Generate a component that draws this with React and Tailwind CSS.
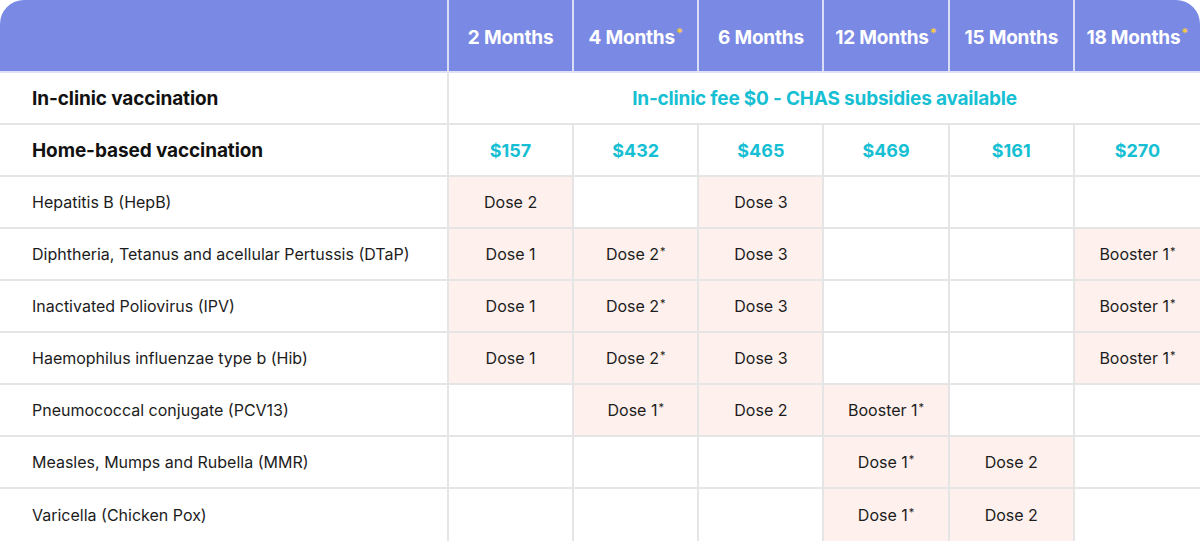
import React from "react";

const months = [
  { label: "2 Months", star: false },
  { label: "4 Months", star: true },
  { label: "6 Months", star: false },
  { label: "12 Months", star: true },
  { label: "15 Months", star: false },
  { label: "18 Months", star: true },
];

const prices = ["$157", "$432", "$465", "$469", "$161", "$270"];

const rows = [
  { name: "Hepatitis B (HepB)", cells: ["Dose 2", "", "Dose 3", "", "", ""] },
  { name: "Diphtheria, Tetanus and acellular Pertussis (DTaP)", cells: ["Dose 1", "Dose 2*", "Dose 3", "", "", "Booster 1*"] },
  { name: "Inactivated Poliovirus (IPV)", cells: ["Dose 1", "Dose 2*", "Dose 3", "", "", "Booster 1*"] },
  { name: "Haemophilus influenzae type b (Hib)", cells: ["Dose 1", "Dose 2*", "Dose 3", "", "", "Booster 1*"] },
  { name: "Pneumococcal conjugate (PCV13)", cells: ["", "Dose 1*", "Dose 2", "Booster 1*", "", ""] },
  { name: "Measles, Mumps and Rubella (MMR)", cells: ["", "", "", "Dose 1*", "Dose 2", ""] },
  { name: "Varicella (Chicken Pox)", cells: ["", "", "", "Dose 1*", "Dose 2", ""] },
];

function CellText({ text }) {
  if (!text) return null;
  const star = text.endsWith("*");
  const base = star ? text.slice(0, -1) : text;
  return (
    <span>
      {base}
      {star && <span className="relative -top-[5px] text-[11px] ml-[1px]">*</span>}
    </span>
  );
}

export default function App() {
  const font = { fontFamily: "Inter, 'Noto Sans', sans-serif" };
  return (
    <div className="w-[1200px] h-[541px] bg-white overflow-hidden" style={font}>
      {/* Header */}
      <div className="grid grid-cols-[449px_repeat(6,1fr)] h-[73px] bg-[#7a89e4] rounded-t-[24px] border-b-2 border-[#dfe2f7]">
        <div className="border-r-2 border-[#d9ddf7]"></div>
        {months.map((m, i) => (
          <div
            key={i}
            className={`flex items-center justify-center pt-[6px] text-white text-[19px] font-bold tracking-[-0.2px] ${i < 5 ? "border-r-2 border-[#d9ddf7]" : ""}`}
          >
            <span>
              {m.label}
              {m.star && <span className="relative -top-[6px] text-[#f7c948] text-[13px] ml-[1px]">*</span>}
            </span>
          </div>
        ))}
      </div>

      {/* In-clinic row */}
      <div className="grid grid-cols-[449px_1fr] h-[52px] border-b-2 border-[#e5e5e5]">
        <div className="flex items-center pl-[32px] pt-[2px] border-r-2 border-[#e5e5e5] text-[19px] font-bold text-[#111] tracking-[-0.1px]">
          In-clinic vaccination
        </div>
        <div className="flex items-center justify-center pt-[2px] text-[19px] font-bold text-[#16bfd3] tracking-[-0.2px]">
          In-clinic fee $0 - CHAS subsidies available
        </div>
      </div>

      {/* Home-based row */}
      <div className="grid grid-cols-[449px_repeat(6,1fr)] h-[52px] border-b-2 border-[#e5e5e5]">
        <div className="flex items-center pl-[32px] pt-[2px] border-r-2 border-[#e5e5e5] text-[19px] font-bold text-[#111] tracking-[-0.1px]">
          Home-based vaccination
        </div>
        {prices.map((p, i) => (
          <div
            key={i}
            className={`flex items-center justify-center text-[18px] font-bold text-[#16bfd3] ${i < 5 ? "border-r-2 border-[#e5e5e5]" : ""}`}
          >
            {p}
          </div>
        ))}
      </div>

      {/* Vaccine rows */}
      {rows.map((r, ri) => (
        <div
          key={ri}
          className={`grid grid-cols-[449px_repeat(6,1fr)] h-[52px] ${ri < rows.length - 1 ? "border-b-2 border-[#e5e5e5]" : ""}`}
        >
          <div className="flex items-center pl-[32px] border-r-2 border-[#e5e5e5] text-[16px] text-[#1c1c1c]">
            {r.name}
          </div>
          {r.cells.map((c, ci) => (
            <div
              key={ci}
              className={`flex items-center justify-center text-[16px] text-[#1c1c1c] ${c ? "bg-[#fef0ec]" : ""} ${ci < 5 ? "border-r-2 border-[#e5e5e5]" : ""}`}
            >
              <CellText text={c} />
            </div>
          ))}
        </div>
      ))}
    </div>
  );
}
